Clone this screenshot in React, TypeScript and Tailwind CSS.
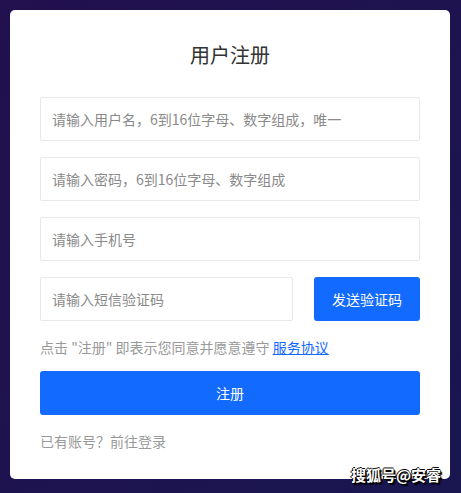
import React from "react";

export default function App() {
  const font = { fontFamily: '"Noto Sans CJK SC", "Noto Sans", sans-serif' };
  return (
    <div
      className="w-[461px] h-[493px] bg-gradient-to-br from-[#22104f] to-[#191650] pt-[10px] px-[10px] relative overflow-hidden"
      style={font}
    >
      <div className="w-[440px] h-[469px] bg-white rounded-[5px] px-[30px] pt-[33px] flex flex-col">
        <div className="text-center text-[20px] leading-[24px] text-[#333]">用户注册</div>
        <div className="mt-[30px] flex flex-col gap-[16px]">
          <input
            className="h-[44px] w-full border border-[#e8e8e8] rounded-[2px] px-[11px] text-[14px] placeholder-[#8a8a8a] outline-none"
            placeholder="请输入用户名，6到16位字母、数字组成，唯一"
          />
          <input
            className="h-[44px] w-full border border-[#e8e8e8] rounded-[2px] px-[11px] text-[14px] placeholder-[#8a8a8a] outline-none"
            placeholder="请输入密码，6到16位字母、数字组成"
          />
          <input
            className="h-[44px] w-full border border-[#e8e8e8] rounded-[2px] px-[11px] text-[14px] placeholder-[#8a8a8a] outline-none"
            placeholder="请输入手机号"
          />
          <div className="flex justify-between">
            <input
              className="h-[44px] w-[253px] border border-[#e8e8e8] rounded-[2px] px-[11px] text-[14px] placeholder-[#8a8a8a] outline-none"
              placeholder="请输入短信验证码"
            />
            <button className="h-[44px] w-[106px] bg-[#136afe] rounded-[3px] text-white text-[14px]">
              发送验证码
            </button>
          </div>
        </div>
        <div className="mt-[16px] text-[14px] leading-[20px] text-[#999]">
          点击 "注册" 即表示您同意并愿意遵守{" "}
          <span className="text-[#136afe] underline">服务协议</span>
        </div>
        <button className="mt-[14px] h-[44px] w-full bg-[#136afe] rounded-[3px] text-white text-[14px]">
          注册
        </button>
        <div className="mt-[16px] text-[14px] leading-[20px] text-[#999]">已有账号？前往登录</div>
      </div>
      <div
        className="absolute left-[351px] top-[465px] text-white text-[15px] font-bold leading-[20px]"
        style={{ textShadow: "1px 1px 0 #000, 2px 2px 1px #000, -1px 0 0 #000, 0 -1px 0 #000" }}
      >
        搜狐号@安睿
      </div>
    </div>
  );
}
